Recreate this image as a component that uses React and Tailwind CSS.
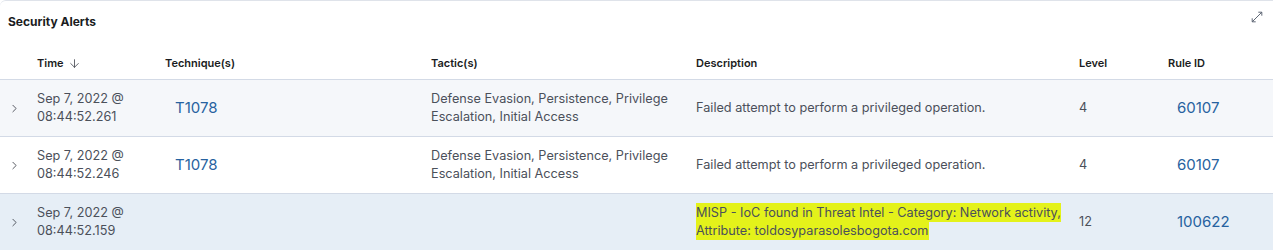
import { ChevronRight, ArrowDown } from "lucide-react";

const alerts = [
    {
        date: "Sep 7, 2022 @",
        time: "08:44:52.261",
        technique: "T1078",
        tactic: "Defense Evasion, Persistence, Privilege Escalation, Initial Access",
        description: "Failed attempt to perform a privileged operation.",
        level: "4",
        ruleId: "60107",
        rowStyle: "bg-[#f5f7fa]",
    },
    {
        date: "Sep 7, 2022 @",
        time: "08:44:52.246",
        technique: "T1078",
        tactic: "Defense Evasion, Persistence, Privilege Escalation, Initial Access",
        description: "Failed attempt to perform a privileged operation.",
        level: "4",
        ruleId: "60107",
        rowStyle: "bg-white",
    },
    {
        date: "Sep 7, 2022 @",
        time: "08:44:52.159",
        technique: "",
        tactic: "",
        description: "MISP - IoC found in Threat Intel - Category: Network activity, Attribute: toldosyparasolesbogota.com",
        level: "12",
        ruleId: "100622",
        rowStyle: "bg-[#e6eef6]",
        highlight: true,
    },
];

const gridCols = "grid grid-cols-[29px_128px_266px_265px_383px_89px_1fr]";

const ExpandIcon = () => (
    <svg width="14" height="14" viewBox="0 0 16 16" fill="none" stroke="#5a6270" strokeWidth="1.1">
        <path d="M2.5 9.5v4h4" />
        <path d="M9.5 2.5h4v4" />
        <path d="M2.5 13.5l11-11" />
    </svg>
);

const App = () => {
    const headStyles = "pl-2 text-[11px] font-semibold text-[#1a1c21]";

    return (
        <div className="w-[1273px] h-[250px] overflow-hidden bg-white font-['Inter',sans-serif]">
            <div className="border-t border-[#dfe3ea] rounded-tl-md">
                <div className="flex items-start justify-between pl-2 pr-2 pt-[13px]">
                    <h2 className="text-[12px] font-bold text-[#1a1c21] leading-4">Security Alerts</h2>
                    <div className="mt-[-4px] mr-[1px]">
                        <ExpandIcon />
                    </div>
                </div>

                <div className={`${gridCols} items-center mt-[17px] h-[33px] border-b border-[#d3dae6]`}>
                    <div />
                    <div className={`${headStyles} flex items-center gap-[4px]`}>
                        Time
                        <ArrowDown size={13} strokeWidth={1.4} className="text-[#343741]" />
                    </div>
                    <div className={headStyles}>Technique(s)</div>
                    <div className={headStyles}>Tactic(s)</div>
                    <div className={headStyles}>Description</div>
                    <div className={headStyles}>Level</div>
                    <div className={headStyles}>Rule ID</div>
                </div>

                {alerts.map((alert, i) => (
                    <div
                        key={i}
                        className={`${gridCols} items-center h-[57px] border-b border-[#d3dae6] text-[12.7px] leading-[18px] text-[#4b505a] ${alert.rowStyle}`}
                    >
                        <div className="flex justify-start pl-[8px]">
                            <ChevronRight size={13} strokeWidth={1.5} className="text-[#343741]" />
                        </div>
                        <div className="pl-2">
                            <div>{alert.date}</div>
                            <div>{alert.time}</div>
                        </div>
                        <div className="pl-[18px] text-[15px] text-[#2762a0]">{alert.technique}</div>
                        <div className="pl-2 pr-1">{alert.tactic}</div>
                        <div className="pl-2 pr-1">
                            {alert.highlight ? (
                                <span className="bg-[#e4f21a] box-decoration-clone py-[2px]">{alert.description}</span>
                            ) : (
                                alert.description
                            )}
                        </div>
                        <div className="pl-2">{alert.level}</div>
                        <div className="pl-[17px] text-[15px] text-[#2762a0]">{alert.ruleId}</div>
                    </div>
                ))}
            </div>
        </div>
    );
};

export default App;
